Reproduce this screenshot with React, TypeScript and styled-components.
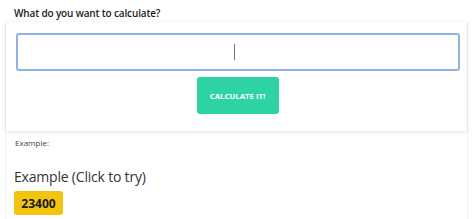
import React from "react";
import styled, { createGlobalStyle } from "styled-components";

const Global = createGlobalStyle`
  html, body { margin: 0; padding: 0; background: #fff; }
  body { font-family: "Open Sans", "Noto Sans", sans-serif; color: #333; }
`;

const Page = styled.div`
  width: 474px;
  height: 219px;
  overflow: hidden;
  box-sizing: border-box;
  display: flex;
  flex-direction: column;
`;

const Title = styled.div`
  font-size: 10px;
  letter-spacing: -0.15px;
  font-weight: 600;
  color: #222;
  line-height: 14px;
  padding: 6px 0 2px 14px;
`;

const Frame = styled.div`
  margin: 0 6px 0 5px;
  border-left: 1px solid #f2f2f2;
  border-right: 1px solid #f2f2f2;
  flex: 1;
  display: flex;
  flex-direction: column;
`;

const Card = styled.div`
  background: #fff;
  box-shadow: 0 1px 4px rgba(0, 0, 0, 0.12);
  padding: 11px 7px 17px 10px;
  display: flex;
  flex-direction: column;
  align-items: stretch;
  gap: 6px;
`;

const InputWrap = styled.div`
  position: relative;
  height: 38px;
`;

const Input = styled.input`
  box-sizing: border-box;
  width: 100%;
  height: 38px;
  border: 2px solid #8db4de;
  border-radius: 3px;
  outline: none;
  background: #fff;
  text-align: center;
  font-family: inherit;
  font-size: 14px;
`;

const Caret = styled.span`
  position: absolute;
  left: 218px;
  top: 11px;
  width: 1px;
  height: 16px;
  background: #777;
`;

const ButtonRow = styled.div`
  display: flex;
  justify-content: center;
  padding-right: 1px;
`;

const CalcButton = styled.button`
  width: 82px;
  height: 37px;
  border: none;
  border-radius: 3px;
  background: #2ed3a4;
  color: #fff;
  font-family: inherit;
  font-size: 7.8px;
  font-weight: 700;
  padding: 0;
`;

const Small = styled.div`
  font-size: 8px;
  color: #444;
  padding: 6px 0 0 9px;
  line-height: 12px;
`;

const Heading = styled.div`
  font-size: 14px;
  letter-spacing: -0.2px;
  color: #333;
  padding: 19px 0 0 8px;
  line-height: 18px;
`;

const Badges = styled.div`
  display: flex;
  padding: 5px 0 0 8px;
`;

const Badge = styled.span`
  display: inline-flex;
  align-items: center;
  justify-content: center;
  width: 49px;
  height: 24px;
  border-radius: 3px;
  background: #f1c40f;
  color: #1a1a1a;
  font-size: 12px;
  font-weight: 700;
`;

export default function App() {
  return (
    <Page>
      <Global />
      <Title>What do you want to calculate?</Title>
      <Frame>
        <Card>
          <InputWrap>
            <Input type="text" />
            <Caret />
          </InputWrap>
          <ButtonRow>
            <CalcButton>CALCULATE IT!</CalcButton>
          </ButtonRow>
        </Card>
        <Small>Example:</Small>
        <Heading>Example (Click to try)</Heading>
        <Badges>
          <Badge>23400</Badge>
        </Badges>
      </Frame>
    </Page>
  );
}
